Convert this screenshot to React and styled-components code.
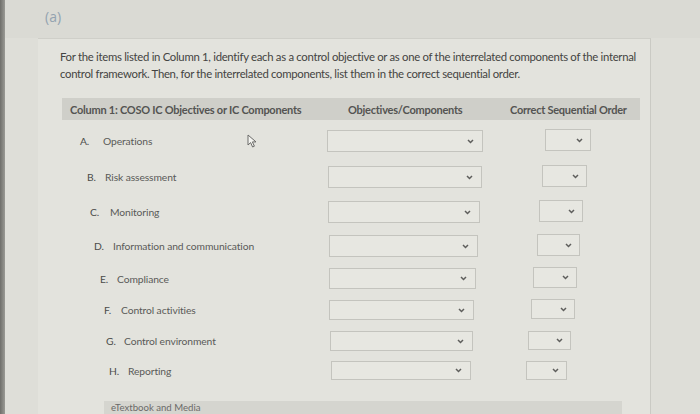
import React from "react";
import styled, { createGlobalStyle } from "styled-components";

const Global = createGlobalStyle`
  html, body {
    margin: 0;
    padding: 0;
    background: #dcdcd6;
    font-family: Lato, "Open Sans", sans-serif;
    overflow: hidden;
  }
`;

const Page = styled.div`
  position: relative;
  width: 700px;
  height: 414px;
  display: flex;
  overflow: hidden;
  background: #deded8;
`;

const Bezel = styled.div`
  width: 5px;
  flex-shrink: 0;
  background: linear-gradient(90deg, #6f6f6b, #9a9a95);
`;

const Screen = styled.div`
  flex: 1;
  display: flex;
  flex-direction: column;
`;

const TopBar = styled.div`
  height: 38px;
  flex-shrink: 0;
  padding: 7px 0 0 40px;
  box-sizing: border-box;
  color: #93a3b0;
  font-size: 14px;
  font-family: "Open Sans", Lato, sans-serif;
  background: #dadad4;
`;

const Card = styled.div`
  margin-left: 33px;
  width: 613px;
  flex: 1;
  background: #e3e3dd;
  border-top: 1px solid #cfcfc9;
  border-right: 1px solid #cacac4;
  padding: 9px 0 0 22px;
  box-sizing: border-box;
`;

const Prompt = styled.p`
  margin: 0;
  width: 600px;
  white-space: nowrap;
  font-size: 11.35px;
  line-height: 17px;
  color: #444442;
  letter-spacing: -0.3px;
`;

const Header = styled.div`
  margin: 16px 0 0 2px;
  width: 578px;
  height: 22px;
  background: #cfcfc9;
  display: grid;
  grid-template-columns: 286px 162px 1fr;
  align-items: center;
  font-size: 11px;
  font-weight: 700;
  color: #545452;
  letter-spacing: -0.25px;
`;

const HeadCell = styled.div`
  padding-left: ${(p) => p.$pad || 0}px;
`;

const Rows = styled.div`
  margin-top: 10px;
  margin-left: -22px;
  display: flex;
  flex-direction: column;
`;

const Row = styled.div`
  height: ${(p) => p.$h}px;
  display: grid;
  grid-template-columns: ${(p) => p.$cols};
  align-items: start;
`;

const Label = styled.div`
  display: flex;
  align-items: center;
  height: ${(p) => p.$h}px;
  padding-left: ${(p) => p.$indent}px;
  font-size: 10.3px;
  color: #5a5a58;
  letter-spacing: -0.1px;
`;

const Letter = styled.span`
  width: ${(p) => p.$w}px;
  flex-shrink: 0;
  color: #4c4c4a;
`;

const Select = styled.div`
  height: ${(p) => p.$h}px;
  margin-top: ${(p) => p.$top || 0}px;
  box-sizing: border-box;
  border: 1px solid #c4c4be;
  background: #e7e7e1;
  display: flex;
  align-items: center;
  justify-content: flex-end;
  padding-right: ${(p) => p.$pad}px;
`;

const Chevron = () => (
  <svg width="7" height="5" viewBox="0 0 7 5">
    <polyline points="1,1 3.5,3.5 6,1" fill="none" stroke="#5e5e5c" strokeWidth="1.5" />
  </svg>
);

const Footer = styled.div`
  margin: 10px 0 0 ${(p) => p.$indent}px;
  width: 518px;
  height: 20px;
  background: #d5d5cf;
  padding: 1px 0 0 7px;
  box-sizing: border-box;
  font-size: 9.6px;
  line-height: 11px;
  color: #6a6a68;
`;

const Cursor = styled.svg`
  position: absolute;
  left: 247px;
  top: 134px;
`;

const rows = [
  { l: "A.", t: "Operations", ind: 42, lw: 23, h: 36, sx: 327, sw: 156, sh: 22, ox: 545, ow: 46, oh: 22, ot: -1 },
  { l: "B.", t: "Risk assessment", ind: 49, lw: 18, h: 35, sx: 328, sw: 154, sh: 22, ox: 542, ow: 45, oh: 22, ot: -1 },
  { l: "C.", t: "Monitoring", ind: 52, lw: 20, h: 34, sx: 328, sw: 152, sh: 22, ox: 539, ow: 44, oh: 22, ot: -1 },
  { l: "D.", t: "Information and communication", ind: 56, lw: 19, h: 33, sx: 329, sw: 149, sh: 22, ox: 537, ow: 43, oh: 22, ot: -1 },
  { l: "E.", t: "Compliance", ind: 62, lw: 17, h: 32, sx: 329, sw: 147, sh: 21, ox: 533, ow: 44, oh: 21, ot: -1 },
  { l: "F.", t: "Control activities", ind: 66, lw: 17, h: 31, sx: 329, sw: 145, sh: 20, ox: 531, ow: 44, oh: 20, ot: -1 },
  { l: "G.", t: "Control environment", ind: 68, lw: 18, h: 30, sx: 330, sw: 143, sh: 20, ox: 528, ow: 43, oh: 19, ot: 0 },
  { l: "H.", t: "Reporting", ind: 71, lw: 19, h: 30, sx: 331, sw: 140, sh: 19, ox: 526, ow: 41, oh: 19, ot: 0 },
];

const CARD_X = 38;

export default function App() {
  return (
    <Page>
      <Global />
      <Bezel />
      <Screen>
        <TopBar>(a)</TopBar>
        <Card>
          <Prompt>
            For the items listed in Column 1, identify each as a control objective or as one of the interrelated components of the internal
            <br />
            control framework. Then, for the interrelated components, list them in the correct sequential order.
          </Prompt>
          <Header>
            <HeadCell $pad={8}>Column 1: COSO IC Objectives or IC Components</HeadCell>
            <HeadCell>Objectives/Components</HeadCell>
            <HeadCell>Correct Sequential Order</HeadCell>
          </Header>
          <Rows>
            {rows.map((r) => (
              <Row
                key={r.l}
                $h={r.h}
                $cols={`${r.sx - CARD_X}px ${r.sw}px ${r.ox - r.sx - r.sw}px ${r.ow}px`}
              >
                <Label $h={r.sh} $indent={r.ind}>
                  <Letter $w={r.lw}>{r.l}</Letter>
                  {r.t}
                </Label>
                <Select $h={r.sh} $pad={8}>
                  <Chevron />
                </Select>
                <span />
                <Select $h={r.oh} $top={r.ot} $pad={7}>
                  <Chevron />
                </Select>
              </Row>
            ))}
          </Rows>
          <Footer $indent={44}>eTextbook and Media</Footer>
        </Card>
      </Screen>
      <Cursor width="12" height="15" viewBox="0 0 12 15">
        <path d="M1 1 L1 11 L3.6 8.6 L5.6 13 L7.4 12.2 L5.4 7.9 L9 7.9 Z" fill="#f4f4f0" stroke="#6a6a68" strokeWidth="1" />
      </Cursor>
    </Page>
  );
}
